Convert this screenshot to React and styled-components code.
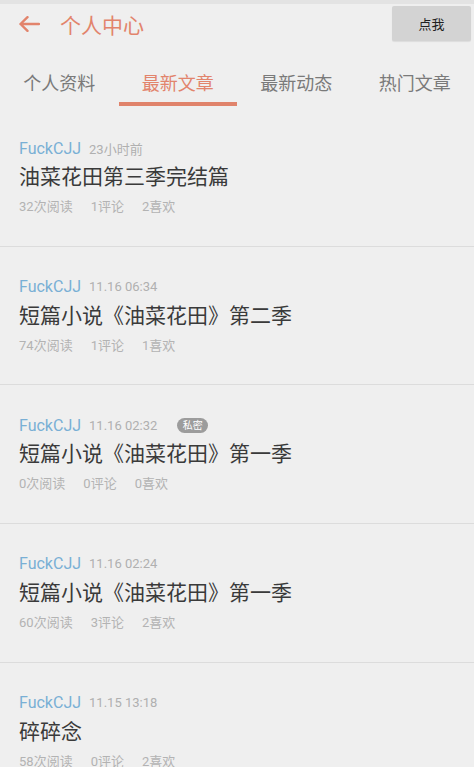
import React from 'react'
import styled, { createGlobalStyle } from 'styled-components'

const GlobalStyle = createGlobalStyle`
  html, body { margin: 0; padding: 0; background: #efefef; }
  body { font-family: Roboto, "Noto Sans CJK SC", sans-serif; }
`

const articles = [
  { author: 'FuckCJJ', time: '23小时前', title: '油菜花田第三季完结篇', reads: 32, comments: 1, likes: 2 },
  { author: 'FuckCJJ', time: '11.16 06:34', title: '短篇小说《油菜花田》第二季', reads: 74, comments: 1, likes: 1 },
  { author: 'FuckCJJ', time: '11.16 02:32', title: '短篇小说《油菜花田》第一季', reads: 0, comments: 0, likes: 0, secret: true },
  { author: 'FuckCJJ', time: '11.16 02:24', title: '短篇小说《油菜花田》第一季', reads: 60, comments: 3, likes: 2 },
  { author: 'FuckCJJ', time: '11.15 13:18', title: '碎碎念', reads: 58, comments: 0, likes: 2 },
]

const tabs = ['个人资料', '最新文章', '最新动态', '热门文章']

const App = () => {
  return (
    <>
      <GlobalStyle />
      <Page>
        <TopStrip />
        {/* ------- header ------- */}
        <Header>
          <BackButton>
            <svg width="22" height="16" viewBox="0 0 22 16" fill="none">
              <path d="M21 8H2.5M9.5 1.2L2.5 8l7 6.8" stroke="#e2846c" strokeWidth="2.4" strokeLinecap="round" strokeLinejoin="round" />
            </svg>
          </BackButton>
          <Title>个人中心</Title>
          <ClickButton>点我</ClickButton>
        </Header>

        {/* ------- tabs ------- */}
        <TabBar>
          {tabs.map((t, i) => (
            <Tab key={t} $active={i === 1}>{t}</Tab>
          ))}
        </TabBar>

        {/* ------- article list ------- */}
        <List>
          {articles.map((a, i) => (
            <Item key={i}>
              <Meta>
                <Author>{a.author}</Author>
                <Time>{a.time}</Time>
                {a.secret && <Badge>私密</Badge>}
              </Meta>
              <ArticleTitle>{a.title}</ArticleTitle>
              <Stats>
                <span>{a.reads}次阅读</span>
                <span>{a.comments}评论</span>
                <span>{a.likes}喜欢</span>
              </Stats>
            </Item>
          ))}
        </List>
      </Page>
    </>
  )
}

const Page = styled.div`
  width: 474px;
  height: 767px;
  overflow: hidden;
  background: #efefef;
`

const TopStrip = styled.div`
  height: 4px;
  background: #e3e3e3;
`

const Header = styled.header`
  height: 40px;
  display: flex;
  align-items: center;
  padding: 0 3px 0 18px;
`

const BackButton = styled.div`
  display: flex;
  align-items: center;
  width: 22px;
  height: 16px;
`

const Title = styled.h1`
  margin: 0 0 0 20px;
  font-size: 21px;
  font-weight: normal;
  color: #e2846c;
  font-family: "Noto Sans CJK SC", sans-serif;
  flex: 1;
`

const ClickButton = styled.button`
  width: 79px;
  height: 35px;
  margin-top: -1px;
  border: none;
  border-radius: 2px;
  background: #d3d3d3;
  color: #222;
  font-size: 13px;
  font-family: "Noto Sans CJK SC", sans-serif;
  box-shadow: 0 1px 1px rgba(0, 0, 0, 0.08);
`

const TabBar = styled.nav`
  display: grid;
  grid-template-columns: repeat(4, 1fr);
  margin-bottom: 2px;
`

const Tab = styled.div`
  height: 62px;
  box-sizing: border-box;
  padding-top: 17px;
  display: flex;
  align-items: center;
  justify-content: center;
  font-size: 18px;
  font-family: "Noto Sans CJK SC", sans-serif;
  color: ${({ $active }) => ($active ? '#e2846c' : '#7a7a7a')};
  border-bottom: 4px solid ${({ $active }) => ($active ? '#e0836b' : 'transparent')};
`

const List = styled.div``

const Item = styled.div`
  height: 138.67px;
  box-sizing: border-box;
  padding: 30px 19px 0;
  border-bottom: 1px solid #dcdcdc;
`

const Meta = styled.div`
  display: flex;
  align-items: center;
  height: 20px;
`

const Author = styled.span`
  font-size: 16px;
  color: #79afd5;
`

const Time = styled.span`
  margin-left: 8px;
  font-size: 13px;
  color: #b0b0b0;
`

const Badge = styled.span`
  margin-left: 20px;
  width: 31px;
  height: 15px;
  border-radius: 8px;
  background: #9c9c9c;
  color: #fff;
  font-size: 10px;
  line-height: 15px;
  text-align: center;
`

const ArticleTitle = styled.div`
  margin-top: 3px;
  font-size: 21px;
  line-height: 28px;
  color: #3a3a3a;
  font-family: "Noto Sans CJK SC", sans-serif;
  white-space: nowrap;
`

const Stats = styled.div`
  margin-top: 9px;
  display: flex;
  gap: 18px;
  font-size: 13px;
  line-height: 18px;
  color: #b3b3b3;
`

export default App
